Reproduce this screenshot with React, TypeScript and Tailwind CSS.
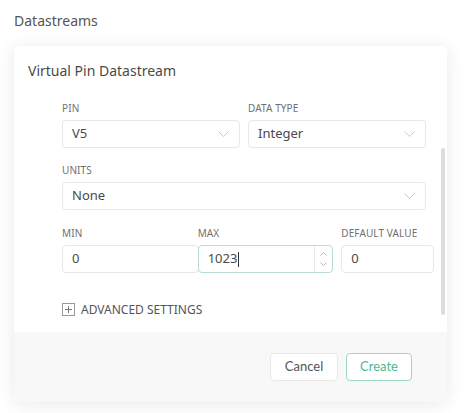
const Chevron = ({ className = '' }: { className?: string }) => (
  <svg className={className} width="11" height="6" viewBox="0 0 11 6" fill="none">
    <polyline points="0.5,0.5 5.5,5.5 10.5,0.5" stroke="#c8c8c8" strokeWidth="1" />
  </svg>
)

function Select({ value, className = '' }: { value: string; className?: string }) {
  return (
    <div
      className={`flex h-[28px] items-center justify-between rounded border border-[#e8e8e8] bg-white pl-[9px] pr-[10px] text-[13px] text-[#4a4a4a] ${className}`}
    >
      <span>{value}</span>
      <Chevron />
    </div>
  )
}

function Label({ children }: { children: string }) {
  return <div className="mb-[5px] text-[10px] leading-[13px] tracking-[0.1px] text-[#707070]">{children}</div>
}

export default function App() {
  return (
    <div className="relative h-[413px] w-[474px] overflow-hidden bg-white font-['Noto_Sans',sans-serif] text-[#4a4a4a]">
      <div className="pl-[14px] pt-[11px] text-[14px] leading-[20px] text-[#555]">Datastreams</div>

      <div className="mx-[14px] mt-[15px] flex h-[356px] w-[433px] flex-col overflow-hidden rounded bg-white shadow-[0_2px_18px_rgba(0,0,0,0.09)]">
        <div className="relative flex-1">
          <div className="pl-[14px] pt-[15px] text-[14px] leading-[20px] text-[#4a4a4a]">Virtual Pin Datastream</div>

          <div className="ml-[48px] mt-[21px]">
            <div className="grid w-[364px] grid-cols-2 gap-x-2">
              <div>
                <Label>PIN</Label>
                <Select value="V5" />
              </div>
              <div>
                <Label>DATA TYPE</Label>
                <Select value="Integer" />
              </div>
            </div>

            <div className="mt-[16px] w-[364px]">
              <Label>UNITS</Label>
              <Select value="None" />
            </div>

            <div className="mt-[17px] flex w-[372px]">
              <div className="w-[137px]">
                <Label>MIN</Label>
                <div className="flex h-[28px] items-center rounded border border-[#e8e8e8] pl-[9px] text-[13px]">0</div>
              </div>
              <div className="-ml-px w-[136px]">
                <Label>MAX</Label>
                <div className="relative flex h-[28px] items-center rounded border border-[#b9ddd1] pl-[9px] text-[13px]">
                  <span>1023</span>
                  <span className="ml-px h-[15px] w-px bg-[#333]" />
                  <div className="absolute right-0 top-0 flex h-full w-[18px] flex-col items-center justify-center gap-[6px] border-l border-[#e8e8e8]">
                    <svg width="7" height="4" viewBox="0 0 7 4" fill="none">
                      <polyline points="0.5,3.5 3.5,0.5 6.5,3.5" stroke="#bbb" strokeWidth="1" />
                    </svg>
                    <svg width="7" height="4" viewBox="0 0 7 4" fill="none">
                      <polyline points="0.5,0.5 3.5,3.5 6.5,0.5" stroke="#bbb" strokeWidth="1" />
                    </svg>
                  </div>
                </div>
              </div>
              <div className="ml-[8px] w-[93px]">
                <Label>DEFAULT VALUE</Label>
                <div className="flex h-[28px] items-center rounded border border-[#e8e8e8] pl-[9px] text-[13px]">0</div>
              </div>
            </div>

            <div className="mt-[30px] flex items-center gap-[6px]">
              <svg width="13" height="13" viewBox="0 0 13 13" fill="none">
                <rect x="0.5" y="0.5" width="12" height="12" stroke="#999" strokeWidth="1" />
                <line x1="3" y1="6.5" x2="10" y2="6.5" stroke="#777" strokeWidth="1" />
                <line x1="6.5" y1="3" x2="6.5" y2="10" stroke="#777" strokeWidth="1" />
              </svg>
              <span className="text-[12px] leading-[13px] text-[#555]">ADVANCED SETTINGS</span>
            </div>
          </div>

          <div className="absolute right-[2px] top-[102px] h-[167px] w-[4px] rounded-full bg-[#dcdcdc]" />
        </div>

        <div className="flex h-[70px] items-center justify-end gap-2 bg-[#f8f8f8] pr-[35px] font-['Lato',sans-serif] text-[13px]">
          <button className="h-[28px] w-[68px] rounded border border-[#e8e8e8] bg-white text-[#555]">Cancel</button>
          <button className="h-[28px] w-[66px] rounded border border-[#9fd9c4] bg-white text-[#4cb993]">Create</button>
        </div>
      </div>
    </div>
  )
}
